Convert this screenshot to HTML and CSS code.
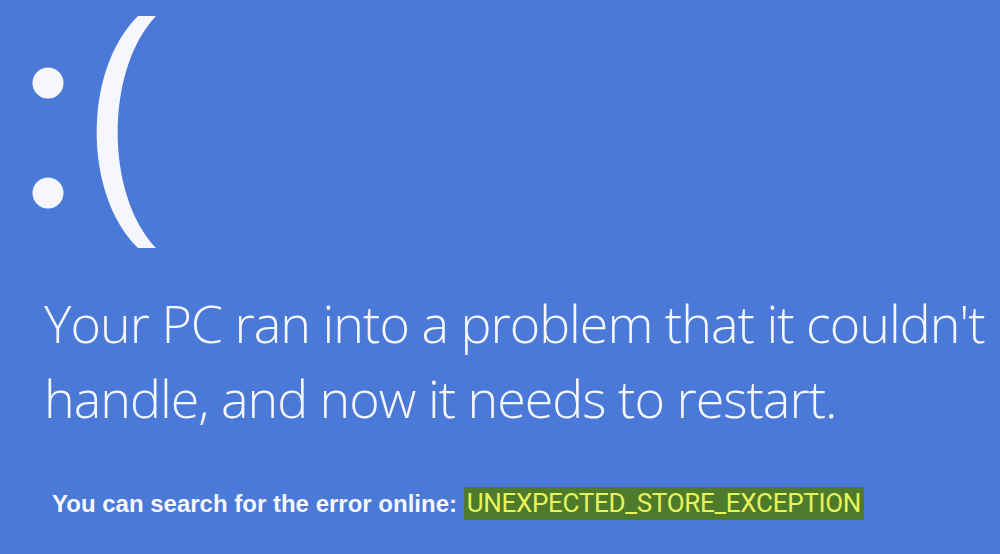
FILE: index.html
```html
<!DOCTYPE html>
<html lang="en">
<head>
<meta charset="utf-8">
<title>Stop error</title>
<link rel="stylesheet" href="styles.css">
</head>
<body>
<main class="screen">
  <svg class="face" width="170" height="260" viewBox="0 0 170 260" aria-label=":(">
    <circle cx="48" cy="83" r="15.5" fill="#f5f7fc"/>
    <circle cx="48" cy="193" r="15.5" fill="#f5f7fc"/>
    <path d="M138,16 C83,70 83,194 138,248 L156,248 C105,194 105,70 156,16 Z" fill="#f5f7fc"/>
  </svg>
  <h1 class="headline">Your PC ran into a problem that it couldn't<br>handle, and now it needs to restart.</h1>
  <p class="search">You can search for the error online: <span class="code">UNEXPECTED_STORE_EXCEPTION</span></p>
</main>
</body>
</html>
```

FILE: styles.css
```css
html, body {
  margin: 0;
  padding: 0;
}
body {
  width: 1000px;
  height: 554px;
  overflow: hidden;
  background: #4a79d8;
  color: #f5f7fc;
}
.screen {
  display: flex;
  flex-direction: column;
  align-items: flex-start;
}
.face {
  display: block;
}
.headline {
  margin: 25px 0 0 44px;
  font-family: "Open Sans", "Noto Sans", sans-serif;
  font-weight: 350;
  font-size: 52px;
  line-height: 75px;
  letter-spacing: -1px;
  white-space: nowrap;
}
.search {
  margin: 52px 0 0 52px;
  font-family: "Liberation Sans", Arial, sans-serif;
  font-weight: bold;
  font-size: 24px;
  line-height: 34px;
  white-space: nowrap;
}
.code {
  display: inline-block;
  font-family: Roboto, "Liberation Sans", sans-serif;
  font-weight: 400;
  font-size: 26px;
  line-height: 33px;
  padding: 0 3px;
  letter-spacing: -0.3px;
  background: #4e7a2c;
  color: #e8f45c;
}
```
